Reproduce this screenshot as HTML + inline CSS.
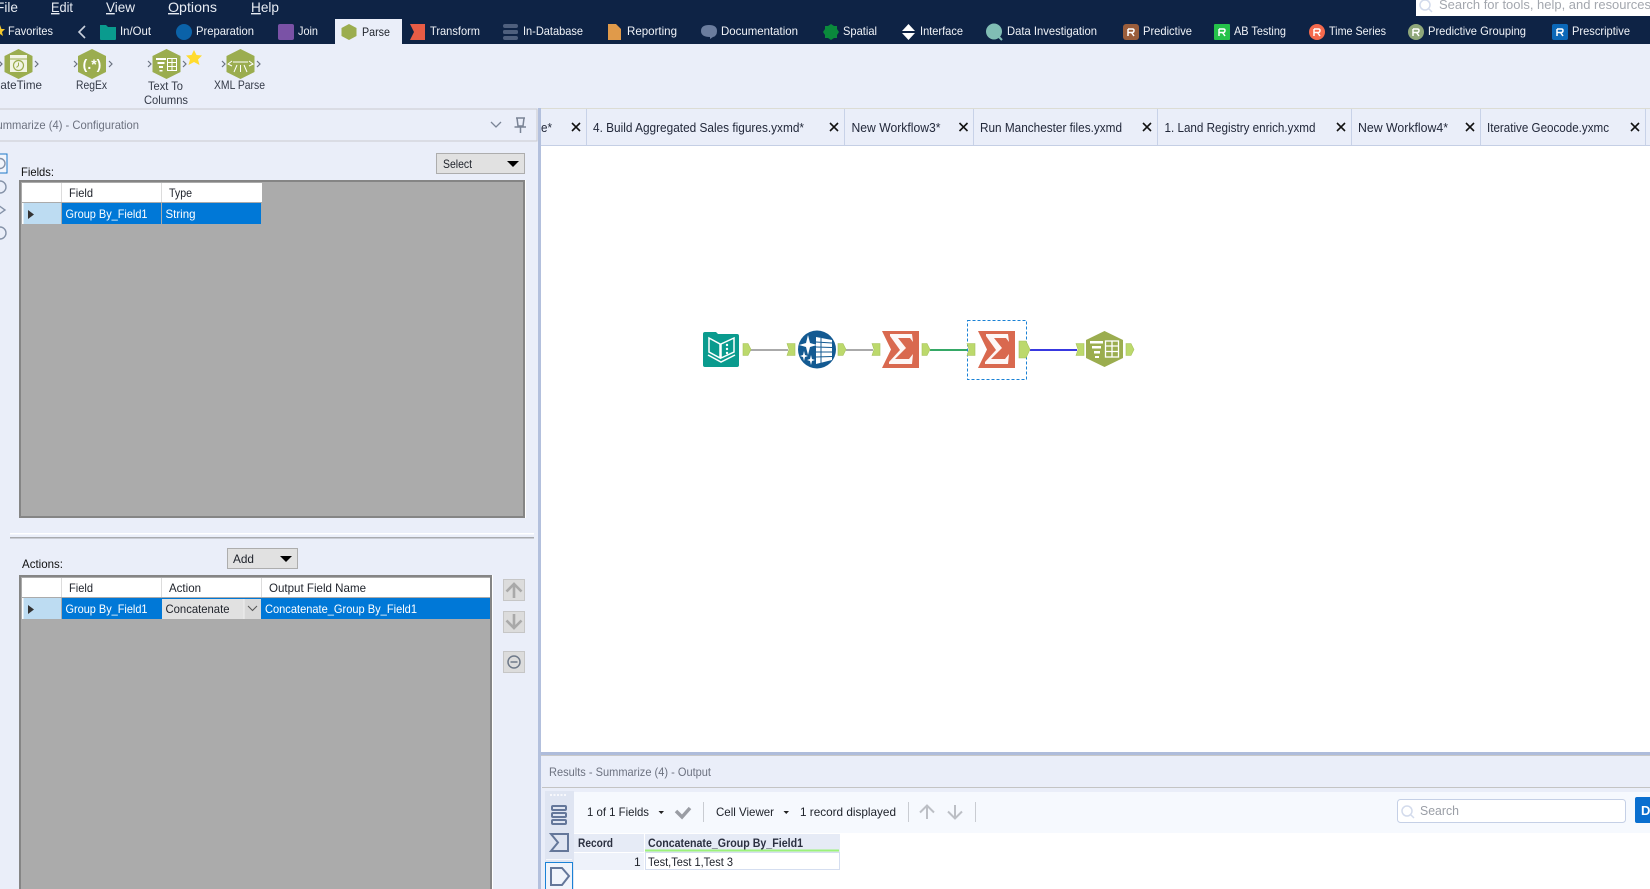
<!DOCTYPE html>
<html><head><meta charset="utf-8"><title>Designer</title>
<style>
html,body{margin:0;padding:0;width:1650px;height:889px;overflow:hidden;background:#eaeef9}
svg{display:block;font-family:"Liberation Sans",sans-serif}
.n{font-size:12px;fill:#f0f3f8}
.m{font-size:14px;fill:#e8ecf3}
.k{font-size:12px;fill:#20242c}
.tb{font-size:13px;fill:#22283a}
.w{font-size:12px;fill:#fff}
.g{font-size:12px;fill:#6d7280}
.x{stroke:#111;stroke-width:1.6;fill:none}
</style></head><body>
<svg width="1650" height="889" viewBox="0 0 1650 889" xmlns="http://www.w3.org/2000/svg">
<defs>
<g id="hex"><polygon points="0,-15 14,-8 14,8 0,15 -14,8 -14,-8" fill="#9bad4f"/></g>
<g id="ch"><path d="M0,-3 L3,0 L0,3" fill="none" stroke="#6b7280" stroke-width="1.2"/></g>
<g id="ao"><path d="M0,-6 H5 L8,0 L5,6 H0 Z" fill="#bcd96c" stroke="#a6c25c" stroke-width=".6"/></g>
<g id="ai"><path d="M0,-6 H8 V6 H0 L2,0 Z" fill="#bcd96c" stroke="#a6c25c" stroke-width=".6"/></g>
<g id="sum"><polygon points="0,0 37,0 37,37 0,37 9,18.5" fill="#d9694f"/><path d="M8,3 H30 L31,11 L28,7 H16 L24,17 L13,28 H27 L31,23 L30,33 H7 V31 L18,19 L8,5 Z" fill="#fff" opacity=".95"/></g>
<g id="rr"><path d="M-3,-3 H1.5 Q3,-3 3,-1.5 Q3,0.5 1,0.5 H-3 M-3,-3 V4 M0.5,0.5 L3,4" fill="none" stroke="#fff" stroke-width="1.5"/></g>
</defs>

<!-- top nav -->
<rect width="1650" height="44" fill="#0e2345"/>
<text class="m" x="-4" y="12" textLength="22" lengthAdjust="spacingAndGlyphs">File</text>
<text class="m" x="51" y="12" textLength="22" lengthAdjust="spacingAndGlyphs"><tspan text-decoration="underline">E</tspan>dit</text>
<text class="m" x="106" y="12" textLength="29" lengthAdjust="spacingAndGlyphs"><tspan text-decoration="underline">V</tspan>iew</text>
<text class="m" x="168" y="12" textLength="49" lengthAdjust="spacingAndGlyphs"><tspan text-decoration="underline">O</tspan>ptions</text>
<text class="m" x="251" y="12" textLength="28" lengthAdjust="spacingAndGlyphs"><tspan text-decoration="underline">H</tspan>elp</text>

<rect x="1416" y="0" width="234" height="16" fill="#fff"/>
<circle cx="1425" cy="5" r="5" fill="none" stroke="#d3dbec" stroke-width="1.5"/><path d="M1429,9 L1432,12" stroke="#d3dbec" stroke-width="1.5"/>
<text x="1439" y="9" font-size="13" fill="#a3a7ae" textLength="212" lengthAdjust="spacingAndGlyphs">Search for tools, help, and resources</text>

<!-- category tabs -->
<polygon points="0,25 1.5,29 5,29 2,32 3,36 0,34 -3,36 -2,32 -5,29 -1.5,29" fill="#f5c92c"/>
<text class="n" x="8" y="35" textLength="45" lengthAdjust="spacingAndGlyphs">Favorites</text>
<path d="M85,26 L79,32 L85,38" fill="none" stroke="#c9d0dc" stroke-width="1.6"/>
<path d="M100,25 h6 l2,2 h8 v12 q0,1 -1,1 h-14 q-1,0 -1,-1 z" fill="#0a9b8e"/>
<text class="n" x="120" y="35" textLength="31" lengthAdjust="spacingAndGlyphs">In/Out</text>
<circle cx="184" cy="32" r="8" fill="#0b62a8"/>
<text class="n" x="196" y="35" textLength="58" lengthAdjust="spacingAndGlyphs">Preparation</text>
<rect x="278" y="24" width="16" height="16" rx="2" fill="#7a52a6"/>
<text class="n" x="298" y="35" textLength="20" lengthAdjust="spacingAndGlyphs">Join</text>
<rect x="335" y="19" width="67" height="25" fill="#eaeef9"/>
<polygon points="349,24 356.500,28 356.500,36 349,40 341.500,36 341.500,28" fill="#9bad4f"/>
<text class="k" x="362" y="36" textLength="28" lengthAdjust="spacingAndGlyphs">Parse</text>
<polygon points="410,24 425,24 425,40 410,40 414,32" fill="#e85c45"/>
<text class="n" x="430" y="35" textLength="50" lengthAdjust="spacingAndGlyphs">Transform</text>
<g fill="#4e5f7d"><rect x="503" y="24" width="15" height="4" rx="2"/><rect x="503" y="30" width="15" height="4" rx="1.500"/><rect x="503" y="36" width="15" height="4" rx="2"/></g>
<text class="n" x="523" y="35" textLength="60" lengthAdjust="spacingAndGlyphs">In-Database</text>
<path d="M608,24 h8 l5,5 v11 h-13 z" fill="#e09a4a"/>
<text class="n" x="627" y="35" textLength="50" lengthAdjust="spacingAndGlyphs">Reporting</text>
<path d="M709,25 q8,0 8,6 q0,5 -4,6 l-3,2 v-2 q-9,0 -9,-6 q0,-6 8,-6z" fill="#6b7d9e"/>
<text class="n" x="721" y="35" textLength="77" lengthAdjust="spacingAndGlyphs">Documentation</text>
<polygon points="831,24 834,26 837,26 837,29 839,32 837,35 837,38 834,38 831,40 828,38 825,38 825,35 823,32 825,29 825,26 828,26" fill="#0a8a3c"/>
<text class="n" x="843" y="35" textLength="34" lengthAdjust="spacingAndGlyphs">Spatial</text>
<polygon points="908.500,24 915,31 902,31" fill="#fff"/><polygon points="902,33 915,33 908.500,40" fill="#fff"/>
<text class="n" x="920" y="35" textLength="43" lengthAdjust="spacingAndGlyphs">Interface</text>
<circle cx="994" cy="31.500" r="8" fill="#80bdb4"/><path d="M999,37 L1002,40" stroke="#80bdb4" stroke-width="2"/>
<text class="n" x="1007" y="35" textLength="90" lengthAdjust="spacingAndGlyphs">Data Investigation</text>
<rect x="1123" y="24" width="16" height="16" rx="3" fill="#9a5d3b"/><use href="#rr" x="1131" y="32"/>
<text class="n" x="1143" y="35" textLength="49" lengthAdjust="spacingAndGlyphs">Predictive</text>
<rect x="1214" y="24" width="16" height="16" rx="1" fill="#25c24a"/><use href="#rr" x="1222" y="32"/>
<text class="n" x="1234" y="35" textLength="52" lengthAdjust="spacingAndGlyphs">AB Testing</text>
<circle cx="1317" cy="32" r="8" fill="#f4694d"/><use href="#rr" x="1317" y="32"/>
<text class="n" x="1329" y="35" textLength="57" lengthAdjust="spacingAndGlyphs">Time Series</text>
<circle cx="1416" cy="32" r="8" fill="#8fa77a"/><use href="#rr" x="1416" y="32"/>
<text class="n" x="1428" y="35" textLength="98" lengthAdjust="spacingAndGlyphs">Predictive Grouping</text>
<rect x="1552" y="24" width="16" height="16" rx="2" fill="#0b68b8"/><use href="#rr" x="1560" y="32"/>
<text class="n" x="1572" y="35" textLength="58" lengthAdjust="spacingAndGlyphs">Prescriptive</text>

<!-- ribbon tools -->
<use href="#hex" x="18.500" y="64"/><use href="#ch" x="35" y="64"/><use href="#ch" x="-1" y="64"/>
<rect x="10" y="55" width="17" height="17" fill="#f2f4e4"/><path d="M10,59 H27" stroke="#9bad4f"/><circle cx="18.500" cy="65.500" r="5" fill="none" stroke="#9bad4f" stroke-width="1.200"/><path d="M18.500,62.500 V65.500 L16.500,67.500" stroke="#9bad4f" fill="none"/>
<text class="g" style="fill:#343a48" x="-8" y="89" textLength="50" lengthAdjust="spacingAndGlyphs">DateTime</text>

<use href="#hex" x="92" y="64"/><use href="#ch" x="74" y="64"/><use href="#ch" x="109" y="64"/>
<text x="92" y="69" text-anchor="middle" font-size="14" font-weight="bold" fill="#fff">(.*)</text>
<text class="g" style="fill:#343a48" x="76" y="89" textLength="31" lengthAdjust="spacingAndGlyphs">RegEx</text>

<use href="#hex" x="166.500" y="64"/><use href="#ch" x="148" y="64"/><use href="#ch" x="183" y="64"/>
<g fill="#fff"><rect x="156" y="58" width="10" height="2"/><rect x="157.500" y="62" width="7" height="2"/><rect x="159" y="66" width="4" height="2"/><rect x="159.500" y="70" width="3" height="1.500"/></g>
<g fill="none" stroke="#fff"><rect x="167.500" y="58.500" width="9" height="12"/><path d="M167.500,62.500 H176.500 M167.500,66.500 H176.500 M172,58.500 V70.500"/></g>
<polygon points="194,50 196.500,55 202,55.500 198,59.500 199.500,65 194,62 188.500,65 190,59.500 186,55.500 191.500,55" fill="#ffdb2e"/>
<text class="g" style="fill:#343a48" x="148" y="90" textLength="35" lengthAdjust="spacingAndGlyphs">Text To</text>
<text class="g" style="fill:#343a48" x="144" y="104" textLength="44" lengthAdjust="spacingAndGlyphs">Columns</text>

<use href="#hex" x="240.500" y="64"/><use href="#ch" x="222" y="64"/><use href="#ch" x="257" y="64"/>
<path d="M232,61 L228,64 L232,66 M249,61 L253,64 L249,66 M233,62 H248 M237,65 L234,72 M240.500,65 V72 M244,65 L247,72" fill="none" stroke="#fff" stroke-width="1"/>
<text class="g" style="fill:#343a48" x="214" y="89" textLength="51" lengthAdjust="spacingAndGlyphs">XML Parse</text>

<!-- configuration panel -->
<rect x="-2" y="109" width="539" height="32" fill="#eaeef9" stroke="#c9cbd0"/>
<text class="g" x="-11" y="129" textLength="150" lengthAdjust="spacingAndGlyphs">Summarize (4) - Configuration</text>
<path d="M491,122 L496,127 L501,122" fill="none" stroke="#7a8496" stroke-width="1.300"/>
<path d="M516,118 H525 M517,118 L518,126 H523 L524,118 M514.500,127 H526 M520.500,127 V133" fill="none" stroke="#7a8496" stroke-width="1.500"/>

<!-- side icons -->
<rect x="-3" y="154" width="10" height="19" fill="#f2f5fc" stroke="#1e78c8"/>
<circle cx="0" cy="163.500" r="5" fill="none" stroke="#8592a8" stroke-width="1.400"/>
<circle cx="0" cy="187" r="6" fill="none" stroke="#8592a8" stroke-width="1.400"/>
<path d="M-2,205 L5,210 L-2,215" fill="none" stroke="#8592a8" stroke-width="1.400"/>
<circle cx="0" cy="233" r="6" fill="none" stroke="#8592a8" stroke-width="1.400"/>

<!-- Select -->
<rect x="436.500" y="153.500" width="88" height="20" fill="#e1e1e1" stroke="#adadad"/>
<text class="k" x="443" y="168" textLength="29" lengthAdjust="spacingAndGlyphs">Select</text>
<polygon points="507,161 519,161 513,167" fill="#000"/>
<text class="k" style="fill:#111" x="21" y="176" textLength="33" lengthAdjust="spacingAndGlyphs">Fields:</text>

<!-- fields grid -->
<rect x="19" y="180" width="507" height="338" fill="#fff"/>
<rect x="20" y="181" width="504" height="336" fill="#ababab" stroke="#858585" stroke-width="2"/>
<rect x="22" y="183" width="240" height="19" fill="#fff"/>
<path d="M61.500,183 V202 M161.500,183 V202" stroke="#dcdcdc"/>
<text class="k" x="69" y="197" textLength="24" lengthAdjust="spacingAndGlyphs">Field</text>
<text class="k" x="169" y="197" textLength="23" lengthAdjust="spacingAndGlyphs">Type</text>
<rect x="22" y="203" width="39" height="21" fill="#bddcf2"/><rect x="22" y="203" width="1.500" height="21" fill="#fff"/>
<rect x="62" y="203" width="99" height="21" fill="#0078d7"/><rect x="162" y="203" width="99" height="21" fill="#0078d7"/>
<polygon points="28,210 34,214.500 28,219" fill="#333"/>
<text class="w" x="65.500" y="218" textLength="82" lengthAdjust="spacingAndGlyphs">Group By_Field1</text>
<text class="w" x="165.500" y="218" textLength="30" lengthAdjust="spacingAndGlyphs">String</text>

<!-- splitter -->
<rect x="10" y="533" width="524" height="1.500" fill="#ffffff"/>
<rect x="10" y="537" width="524" height="1.500" fill="#a8aaae"/>

<!-- Add -->
<rect x="227.500" y="548.500" width="70" height="20" fill="#e1e1e1" stroke="#adadad"/>
<text class="k" x="233" y="563" textLength="21" lengthAdjust="spacingAndGlyphs">Add</text>
<polygon points="280,556 292,556 286,562" fill="#000"/>
<text class="k" style="fill:#111" x="22" y="568" textLength="41" lengthAdjust="spacingAndGlyphs">Actions:</text>

<!-- actions grid -->
<rect x="19" y="575" width="474" height="320" fill="#fff"/>
<rect x="20" y="576" width="471" height="320" fill="#ababab" stroke="#858585" stroke-width="2"/>
<rect x="22" y="578" width="468" height="19" fill="#fff"/>
<path d="M61.500,578 V597 M161.500,578 V597 M261.500,578 V597" stroke="#dcdcdc"/>
<text class="k" x="69" y="592" textLength="24" lengthAdjust="spacingAndGlyphs">Field</text>
<text class="k" x="169" y="592" textLength="32" lengthAdjust="spacingAndGlyphs">Action</text>
<text class="k" x="269" y="592" textLength="97" lengthAdjust="spacingAndGlyphs">Output Field Name</text>
<rect x="22" y="598" width="39" height="21" fill="#bddcf2"/><rect x="22" y="598" width="1.500" height="21" fill="#fff"/>
<rect x="62" y="598" width="428" height="21" fill="#0078d7"/>
<rect x="162" y="599" width="99" height="20" fill="#e1e1e1"/>
<rect x="244" y="599" width="17" height="20" fill="#d8d8d8"/>
<rect x="243.500" y="599" width="1" height="20" fill="#f0f0f0"/>
<path d="M248,606 L252.500,610.500 L257,606" fill="none" stroke="#555" stroke-width="1"/>
<polygon points="28,605 34,609.500 28,614" fill="#333"/>
<text class="w" x="65.500" y="613" textLength="82" lengthAdjust="spacingAndGlyphs">Group By_Field1</text>
<text class="k" x="165.500" y="613" textLength="64" lengthAdjust="spacingAndGlyphs">Concatenate</text>
<text class="w" x="265" y="613" textLength="152" lengthAdjust="spacingAndGlyphs">Concatenate_Group By_Field1</text>

<!-- side buttons -->
<g fill="#dcdcdc" stroke="#c6c6c6"><rect x="503.500" y="579.500" width="21" height="21"/><rect x="503.500" y="611.500" width="21" height="21"/><rect x="503.500" y="651.500" width="21" height="21"/></g>
<path d="M514,598 V584 M506.500,591.500 L514,584 L521.500,591.500" fill="none" stroke="#a9a9a9" stroke-width="2.600"/>
<path d="M514,614 V628 M506.500,620.500 L514,628 L521.500,620.500" fill="none" stroke="#a9a9a9" stroke-width="2.600"/>
<circle cx="514" cy="662" r="6" fill="none" stroke="#6f7a8a" stroke-width="1.500"/><path d="M510.500,662 H517.500" stroke="#6f7a8a" stroke-width="1.500"/>

<!-- vertical divider -->
<rect x="538" y="108" width="3" height="781" fill="#b3c0dd"/>

<!-- doc tabs -->
<rect x="541" y="108" width="1109" height="37" fill="#eaeef9"/>
<rect x="541" y="108" width="1109" height="1" fill="#dcdcd4"/>
<rect x="541" y="145" width="1109" height="1" fill="#c5cfe5"/>
<g fill="#c8d2e8"><rect x="586" y="109" width="1" height="36"/><rect x="844" y="109" width="1" height="36"/><rect x="973" y="109" width="1" height="36"/><rect x="1157" y="109" width="1" height="36"/><rect x="1351" y="109" width="1" height="36"/><rect x="1480" y="109" width="1" height="36"/><rect x="1645" y="109" width="1" height="36"/></g>
<text class="tb" x="541" y="132" textLength="11" lengthAdjust="spacingAndGlyphs">e*</text>
<text class="tb" x="593" y="132" textLength="211" lengthAdjust="spacingAndGlyphs">4. Build Aggregated Sales figures.yxmd*</text>
<text class="tb" x="851.500" y="132" textLength="89" lengthAdjust="spacingAndGlyphs">New Workflow3*</text>
<text class="tb" x="980" y="132" textLength="142" lengthAdjust="spacingAndGlyphs">Run Manchester files.yxmd</text>
<text class="tb" x="1164.500" y="132" textLength="151" lengthAdjust="spacingAndGlyphs">1. Land Registry enrich.yxmd</text>
<text class="tb" x="1358" y="132" textLength="90" lengthAdjust="spacingAndGlyphs">New Workflow4*</text>
<text class="tb" x="1487" y="132" textLength="122" lengthAdjust="spacingAndGlyphs">Iterative Geocode.yxmc</text>
<g class="x">
<path d="M572,123 L580,131 M580,123 L572,131"/><path d="M830,123 L838,131 M838,123 L830,131"/><path d="M959.500,123 L967.500,131 M967.500,123 L959.500,131"/><path d="M1143,123 L1151,131 M1151,123 L1143,131"/><path d="M1337,123 L1345,131 M1345,123 L1337,131"/><path d="M1466,123 L1474,131 M1474,123 L1466,131"/><path d="M1631,123 L1639,131 M1639,123 L1631,131"/>
</g>

<!-- canvas -->
<rect x="541" y="146" width="1109" height="606" fill="#fff"/>
<path d="M750,350 H788" stroke="#aaa" stroke-width="2"/>
<path d="M846,350 H873" stroke="#aaa" stroke-width="2"/>
<path d="M930,350 H968" stroke="#35a866" stroke-width="2"/>
<path d="M1030,350 H1077" stroke="#3838e0" stroke-width="2"/>

<!-- book -->
<path d="M703,334 q0,-2 2,-2 h11 l2,2 h19 q2,0 2,2 v29 q0,2 -2,2 h-32 q-2,0 -2,-2 z" fill="#0a9b8e"/>
<path d="M709,338 L720,344 V358 L709,352 Z M721,344 L734,338 V352 L721,358 Z" fill="#0a9b8e" stroke="#fff" stroke-width="1.500"/>
<path d="M708,355 L721,362 L735,355" fill="none" stroke="#fff" stroke-width="1.500"/>
<g fill="#fff"><circle cx="727" cy="345" r="1.200"/><circle cx="727" cy="349" r="1.200"/><circle cx="727" cy="353" r="1.200"/></g>
<use href="#ao" x="743" y="349.500"/>
<use href="#ai" x="787" y="349.500"/>

<!-- blue circle -->
<circle cx="817" cy="349.500" r="19" fill="#135a92"/>
<path d="M816,337 L832,340 L832,360 L816,364 Z" fill="#fff"/>
<path d="M816,342 L832,343 M816,347 L832,347.500 M816,352 L832,352 M816,357 L832,356.500 M821,338 V363" stroke="#135a92" stroke-width="1"/>
<path d="M808,335 L810,343 L817,345 L810,347 L808,355 L806,347 L799,345 L806,343Z" fill="#fff"/>
<path d="M804,351 L805,355 L808,356 L805,357 L804,361 L803,357 L800,356 L803,355Z" fill="#fff"/>
<path d="M811,355 L812,359 L815,360 L812,361 L811,365 L810,361 L807,360 L810,359Z" fill="#fff"/>
<use href="#ao" x="838" y="349.500"/>
<use href="#ai" x="872" y="349.500"/>

<use href="#sum" x="882" y="331"/>
<use href="#ao" x="922" y="349.500"/>

<!-- selected summarize -->
<rect x="967.500" y="320.500" width="59" height="59" fill="none" stroke="#1a82d6" stroke-dasharray="3 2"/>
<use href="#ai" x="967" y="349.500"/>
<use href="#sum" x="978" y="331"/>
<path d="M1019,341 H1026 L1030,349.500 L1026,358 H1019 Z" fill="#bcd96c" stroke="#a6c25c" stroke-width=".6"/>

<use href="#ai" x="1076" y="349.500"/>
<polygon points="1104.500,331 1123,340 1123,358 1104.500,367 1086,358 1086,340" fill="#9bad4f"/>
<g fill="#fff"><rect x="1090" y="341" width="13" height="2.500"/><rect x="1092" y="346" width="9" height="2.500"/><rect x="1094" y="351" width="6" height="2.500"/><rect x="1095" y="356" width="4" height="2"/></g>
<g fill="none" stroke="#fff" stroke-width="1.300"><rect x="1105.500" y="341" width="13" height="16"/><path d="M1105.500,346 H1118.500 M1105.500,351.500 H1118.500 M1112,341 V357"/></g>
<use href="#ao" x="1126" y="349.500"/>

<!-- results -->
<rect x="541" y="752" width="1109" height="3" fill="#aebcdb"/>
<rect x="541" y="755" width="1109" height="1" fill="#c8c8c8"/>
<rect x="542" y="756" width="1108" height="32" fill="#eaeef9"/>
<rect x="542" y="787" width="1108" height="1" fill="#c4c4c4"/>
<text class="g" x="549" y="776" textLength="162" lengthAdjust="spacingAndGlyphs">Results - Summarize (4) - Output</text>

<rect x="574" y="792" width="1076" height="41" fill="#f6f9fe"/>
<rect x="574" y="833" width="1076" height="56" fill="#fff"/>
<rect x="545" y="791" width="29" height="98" fill="#dfe5f2"/>
<path d="M550,795 H567" stroke="#fff" stroke-width="1.500" stroke-dasharray="2 1.500"/>
<g fill="none" stroke="#64779a" stroke-width="2"><rect x="552" y="806" width="14" height="4" rx="1"/><rect x="552" y="813" width="14" height="4" rx="1"/><rect x="552" y="820" width="14" height="4" rx="1"/></g>
<path d="M551,834 H568 V851 H551 L558,842.500 Z" fill="none" stroke="#64779a" stroke-width="2"/>
<path d="M546,859.500 H572" stroke="#f6f8fc" stroke-width="1"/>
<rect x="545.500" y="862.500" width="27" height="30" fill="#f0f4fb" stroke="#1a82d6"/>
<path d="M551,868 H562 L569,876 L562,885 H551 Z" fill="none" stroke="#64779a" stroke-width="2"/>

<text class="k" x="587" y="816" textLength="62" lengthAdjust="spacingAndGlyphs">1 of 1 Fields</text>
<polygon points="658.500,811 664,811 661.250,814" fill="#222"/>
<path d="M676,811 L682,817 L690,808" fill="none" stroke="#9a9da4" stroke-width="3.500"/>
<rect x="703" y="802" width="1" height="20" fill="#c9ccd2"/>
<text class="k" x="716" y="816" textLength="58" lengthAdjust="spacingAndGlyphs">Cell Viewer</text>
<polygon points="783.500,811 789,811 786.250,814" fill="#222"/>
<text class="k" x="800" y="816" textLength="96" lengthAdjust="spacingAndGlyphs">1 record displayed</text>
<rect x="908" y="802" width="1" height="20" fill="#c9ccd2"/>
<path d="M927,819 V806 M920,812.500 L927,805.500 L934,812.500" fill="none" stroke="#bcbfc5" stroke-width="2"/>
<path d="M955,805 V818 M948,811.500 L955,818.500 L962,811.500" fill="none" stroke="#bcbfc5" stroke-width="2"/>
<rect x="975" y="802" width="1" height="20" fill="#c9ccd2"/>

<rect x="1397.500" y="799.500" width="228" height="23" rx="3" fill="#fff" stroke="#c5d0e6"/>
<circle cx="1407" cy="811" r="5" fill="none" stroke="#d3dbec" stroke-width="1.500"/><path d="M1411,815 L1414,818" stroke="#d3dbec" stroke-width="1.500"/>
<text x="1420" y="815" font-size="13" fill="#9a9ea6" textLength="39" lengthAdjust="spacingAndGlyphs">Search</text>
<rect x="1635" y="797" width="20" height="26" rx="2" fill="#0a6fcf"/>
<text x="1641" y="815" font-size="13" font-weight="bold" fill="#fff">D</text>

<!-- data table -->
<rect x="574" y="834" width="70" height="18" fill="#e6ebf6"/>
<rect x="645" y="834" width="195" height="18" fill="#e6ebf6"/>
<rect x="645" y="849.500" width="194" height="2" fill="#9cf27b"/>
<rect x="574" y="853" width="70" height="17" fill="#eef2fa"/>
<rect x="645.500" y="852.500" width="194" height="17" fill="#fff" stroke="#d5def0"/>
<text x="578" y="847" font-size="12" font-weight="bold" fill="#2b3040" textLength="35" lengthAdjust="spacingAndGlyphs">Record</text>
<text x="648" y="847" font-size="12" font-weight="bold" fill="#2b3040" textLength="155" lengthAdjust="spacingAndGlyphs">Concatenate_Group By_Field1</text>
<text class="k" x="634" y="866">1</text>
<text class="k" x="648" y="866" textLength="85" lengthAdjust="spacingAndGlyphs">Test,Test 1,Test 3</text>
</svg>
</body></html>
